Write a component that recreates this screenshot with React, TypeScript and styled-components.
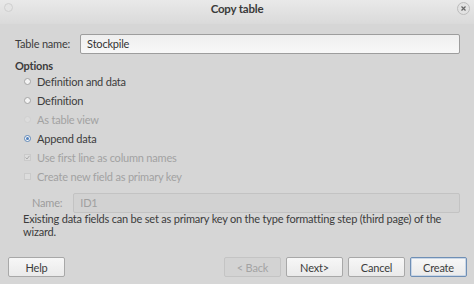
import React from "react";
import styled, { createGlobalStyle } from "styled-components";

const Global = createGlobalStyle`
  html, body { margin: 0; padding: 0; }
  body { background: #d6d6d6; font-family: Lato, "Open Sans", sans-serif; }
`;

const Window = styled.div`
  width: 474px;
  height: 284px;
  background: #d6d6d6;
  display: flex;
  flex-direction: column;
  color: #3c3c3c;
  font-size: 11px;
  letter-spacing: -0.2px;
  overflow: hidden;
`;

const TitleBar = styled.div`
  height: 24px;
  flex: none;
  display: flex;
  align-items: center;
  justify-content: space-between;
  padding: 0 4px 0 4px;
  background: linear-gradient(#e9e9e9, #dadada);
  position: relative;
`;

const Title = styled.div`
  position: absolute;
  left: 0;
  right: 0;
  top: 2px;
  text-align: center;
  font-weight: bold;
  font-size: 11.5px;
  color: #3a3a3a;
`;

const WinDot = styled.div`
  width: 7px;
  height: 7px;
  border-radius: 50%;
  border: 1px solid #cfcfcf;
  background: #e4e4e4;
  margin-top: -10px;
`;

const CloseBtn = styled.div`
  width: 11px;
  height: 11px;
  border-radius: 50%;
  border: 1px solid #bcbcbc;
  background: #e2e2e2;
  display: flex;
  align-items: center;
  justify-content: center;
  margin-top: -8px;
`;

const Body = styled.div`
  flex: 1;
  display: flex;
  flex-direction: column;
  padding: 9px 14px 0 15px;
`;

const NameRow = styled.div`
  display: flex;
  align-items: center;
  gap: 10px;
  height: 21px;
`;

const Label = styled.span<{ $disabled?: boolean }>`
  color: ${(p) => (p.$disabled ? "#9c9c9c" : "#3c3c3c")};
  white-space: nowrap;
`;

const TextInput = styled.div<{ $disabled?: boolean }>`
  flex: 1;
  height: 20px;
  box-sizing: border-box;
  border: 1px solid ${(p) => (p.$disabled ? "#c3c3c3" : "#9d9d9d")};
  border-radius: 2px;
  background: ${(p) => (p.$disabled ? "#d2d2d2" : "linear-gradient(#efefef, #f8f8f8)")};
  color: ${(p) => (p.$disabled ? "#a0a0a0" : "#333")};
  display: flex;
  align-items: center;
  padding-left: 6px;
`;

const SectionHead = styled.div`
  font-weight: bold;
  margin-top: 5px;
  height: 13px;
  line-height: 13px;
`;

const OptionList = styled.div`
  display: flex;
  flex-direction: column;
  padding-left: 9px;
`;

const Option = styled.div<{ $disabled?: boolean }>`
  display: flex;
  align-items: center;
  gap: 6px;
  height: 19px;
  color: ${(p) => (p.$disabled ? "#a2a2a2" : "#3c3c3c")};
`;

const Radio = styled.span<{ $checked?: boolean; $disabled?: boolean }>`
  width: 7px;
  height: 7px;
  box-sizing: border-box;
  border-radius: 50%;
  border: 1px solid ${(p) => (p.$checked ? "#5d87b8" : p.$disabled ? "#d0d0d0" : "#a5a5a5")};
  background: ${(p) => (p.$checked ? "#f6f6f6" : p.$disabled ? "#dcdcdc" : "#f4f4f4")};
  position: relative;
  flex: none;
  &::after {
    content: "";
    display: ${(p) => (p.$checked ? "block" : "none")};
    position: absolute;
    inset: 1px;
    border-radius: 50%;
    background: #4f7fbd;
  }
`;

const Check = styled.span`
  width: 7px;
  height: 7px;
  box-sizing: border-box;
  border: 1px solid #cacaca;
  background: #dcdcdc;
  flex: none;
  display: flex;
  align-items: center;
  justify-content: center;
`;

const SubRow = styled.div`
  display: flex;
  align-items: center;
  gap: 11px;
  padding-left: 17px;
  margin-top: 7px;
  height: 19px;
`;

const Note = styled.div`
  margin-top: 0;
  padding-left: 8px;
  line-height: 13px;
  width: 440px;
`;

const Footer = styled.div`
  margin-top: auto;
  display: flex;
  align-items: center;
  padding: 0 7px 7px 8px;
  gap: 5px;
`;

const Spacer = styled.div`
  flex: 1;
`;

const Button = styled.button<{ $disabled?: boolean; $default?: boolean }>`
  width: 57px;
  height: 20px;
  box-sizing: border-box;
  padding: 0;
  font: inherit;
  letter-spacing: -0.2px;
  border-radius: 2px;
  border: 1px solid ${(p) => (p.$default ? "#6f8fb5" : p.$disabled ? "#c4c4c4" : "#a8a8a8")};
  background: ${(p) => (p.$disabled ? "#d3d3d3" : "linear-gradient(#f7f7f7, #eaeaea)")};
  color: ${(p) => (p.$disabled ? "#a3a3a3" : "#3c3c3c")};
  box-shadow: ${(p) => (p.$default ? "inset 0 0 0 1px #c9d6e6" : "none")};
`;

export default function App() {
  return (
    <Window>
      <Global />
      <TitleBar>
        <WinDot />
        <Title>Copy table</Title>
        <CloseBtn>
          <svg width="5" height="5" viewBox="0 0 5 5">
            <path d="M0.5 0.5 L4.5 4.5 M4.5 0.5 L0.5 4.5" stroke="#666" strokeWidth="1.2" />
          </svg>
        </CloseBtn>
      </TitleBar>
      <Body>
        <NameRow>
          <Label>Table name:</Label>
          <TextInput>Stockpile</TextInput>
        </NameRow>
        <SectionHead>Options</SectionHead>
        <OptionList>
          <Option>
            <Radio />
            Definition and data
          </Option>
          <Option>
            <Radio />
            Definition
          </Option>
          <Option $disabled>
            <Radio $disabled />
            As table view
          </Option>
          <Option>
            <Radio $checked />
            Append data
          </Option>
          <Option $disabled>
            <Check>
              <svg width="5" height="5" viewBox="0 0 5 5">
                <path d="M0.5 2.5 L2 4 L4.5 0.8" stroke="#a9a9a9" strokeWidth="1" fill="none" />
              </svg>
            </Check>
            Use first line as column names
          </Option>
          <Option $disabled>
            <Check />
            Create new field as primary key
          </Option>
        </OptionList>
        <SubRow>
          <Label $disabled>Name:</Label>
          <TextInput $disabled>ID1</TextInput>
        </SubRow>
        <Note>
          Existing data fields can be set as primary key on the type formatting step (third page) of the wizard.
        </Note>
      </Body>
      <Footer>
        <Button>Help</Button>
        <Spacer />
        <Button $disabled>&lt; Back</Button>
        <Button>Next&gt;</Button>
        <Button>Cancel</Button>
        <Button $default>Create</Button>
      </Footer>
    </Window>
  );
}
